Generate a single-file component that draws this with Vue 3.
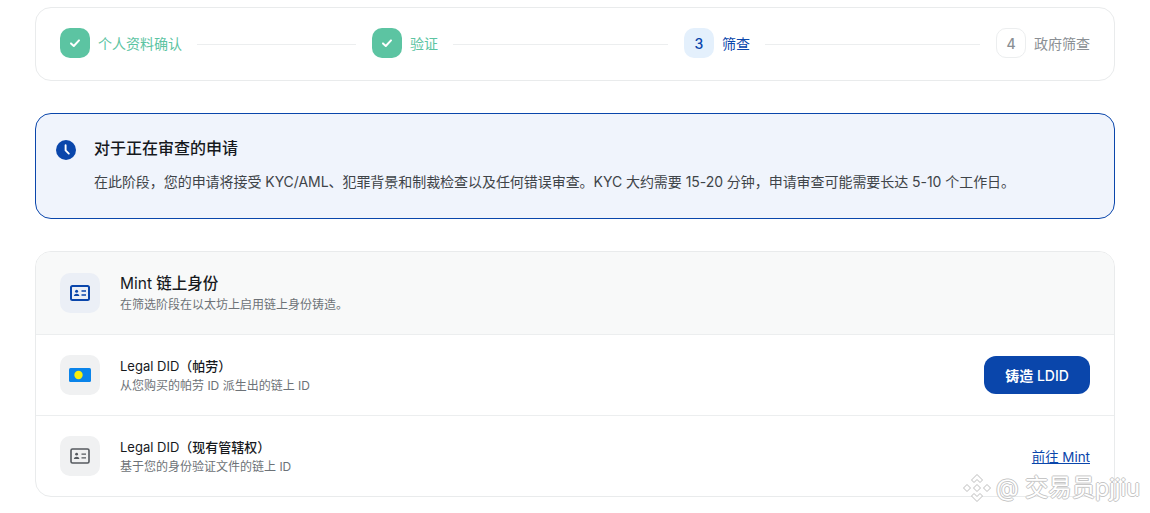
<script setup>
const steps = [
  { label: '个人资料确认', state: 'done' },
  { label: '验证', state: 'done' },
  { label: '筛查', state: 'active', num: 3 },
  { label: '政府筛查', state: 'todo', num: 4 },
]
</script>

<template>
  <div class="page">
    <section class="stepper">
      <div v-for="(s, i) in steps" :key="s.label" class="step" :class="[s.state, { last: i === steps.length - 1 }]">
        <span class="badge">
          <svg v-if="s.state === 'done'" width="14" height="14" viewBox="0 0 14 14" fill="none">
            <path d="M3 7.400 5.800 10 11 4.400" stroke="#fff" stroke-width="2" stroke-linecap="round" stroke-linejoin="round" />
          </svg>
          <template v-else>{{ s.num }}</template>
        </span>
        <span class="label">{{ s.label }}</span>
        <span v-if="i < steps.length - 1" class="line"></span>
      </div>
    </section>

    <section class="alert">
      <svg class="clock" width="20" height="20" viewBox="0 0 20 20">
        <circle cx="10" cy="10" r="10" fill="#0a46ab" />
        <path d="M9.600 5.200V10.400L12.800 13.600" stroke="#fff" stroke-width="1.900" fill="none" stroke-linecap="round" stroke-linejoin="round" />
      </svg>
      <div class="alert-body">
        <h2>对于正在审查的申请</h2>
        <p>在此阶段，您的申请将接受 KYC/AML、犯罪背景和制裁检查以及任何错误审查。KYC 大约需要 15-20 分钟，申请审查可能需要长达 5-10 个工作日。</p>
      </div>
    </section>

    <section class="card">
      <div class="row head">
        <span class="tile blue">
          <svg width="20" height="16" viewBox="0 0 20 16" fill="none">
            <rect x="1" y="1" width="18" height="14" rx="1.500" stroke="#0a46ab" stroke-width="2" />
            <circle cx="6.600" cy="6.200" r="1.500" fill="#0a46ab" />
            <path d="M3.800 11c.3-1.600 1.400-2.300 2.800-2.300s2.500.7 2.800 2.300z" fill="#0a46ab" />
            <path d="M11.500 6h4.500M11.500 10h4.500" stroke="#0a46ab" stroke-width="1.500" />
          </svg>
        </span>
        <div class="text">
          <h3 class="big">Mint <span class="cjk">链上身份</span></h3>
          <p>在筛选阶段在以太坊上启用链上身份铸造。</p>
        </div>
      </div>
      <div class="row">
        <span class="tile">
          <svg width="22" height="14" viewBox="0 0 22 14">
            <rect width="22" height="14" rx="1.500" fill="#0a84ea" />
            <circle cx="9.500" cy="7" r="4.200" fill="#f5ee0e" />
          </svg>
        </span>
        <div class="text">
          <h3>Legal DID<span class="cjk">（帕劳）</span></h3>
          <p>从您购买的帕劳 ID 派生出的链上 ID</p>
        </div>
        <button class="mint" type="button"><span class="strong">铸造</span> LDID</button>
      </div>
      <div class="row">
        <span class="tile">
          <svg width="20" height="16" viewBox="0 0 20 16" fill="none">
            <rect x="1" y="1" width="18" height="14" rx="1.500" stroke="#555a5f" stroke-width="1.600" />
            <circle cx="6.600" cy="6.200" r="1.400" fill="#555a5f" />
            <path d="M3.800 11c.3-1.600 1.400-2.300 2.800-2.300s2.500.7 2.800 2.300z" fill="#555a5f" />
            <path d="M11.500 6.200h4.500M11.500 9.800h4.500" stroke="#555a5f" stroke-width="1.300" />
          </svg>
        </span>
        <div class="text">
          <h3>Legal DID<span class="cjk">（现有管辖权）</span></h3>
          <p>基于您的身份验证文件的链上 ID</p>
        </div>
        <a class="link" href="#" @click.prevent>前往 Mint</a>
      </div>
    </section>

    <div class="mark">
      <svg width="30" height="30" viewBox="0 0 30 30" fill="#fff" stroke="#bdbdbd" stroke-width="1">
        <path d="M15 1.500 20.500 7 18 9.500 15 6.500 12 9.500 9.500 7z" />
        <path d="M15 28.500 20.500 23 18 20.500 15 23.500 12 20.500 9.500 23z" />
        <path d="M1.500 15 5 11.500 8.500 15 5 18.500z" />
        <path d="M28.500 15 25 11.500 21.500 15 25 18.500z" />
        <path d="M15 11.500 18.500 15 15 18.500 11.500 15z" />
      </svg>
      <span>@ 交易员pjjiu</span>
    </div>
  </div>
</template>

<style scoped>
.page {
  position: relative;
  box-sizing: border-box;
  width: 1150px;
  height: 513px;
  padding: 7px 35px 0;
  overflow: hidden;
  background: #fff;
  font-family: Inter, "Noto Sans CJK SC", sans-serif;
  color: #16191d;
}
.stepper {
  box-sizing: border-box;
  display: flex;
  align-items: center;
  height: 74px;
  padding: 0 24px;
  border: 1px solid #e9ebec;
  border-radius: 16px;
}
.step {
  flex: 1 1 0;
  display: flex;
  align-items: center;
  min-width: 0;
}
.step.last {
  flex: none;
}
.badge {
  flex: none;
  box-sizing: border-box;
  display: flex;
  align-items: center;
  justify-content: center;
  width: 30px;
  height: 30px;
  margin: 0 8px 2px 0;
  border-radius: 10px;
  font-size: 14px;
  font-weight: 500;
}
.label {
  flex: none;
  font-size: 14px;
  line-height: 20px;
}
.line {
  flex: 1;
  height: 1px;
  margin: 0 16px 0 15px;
  background: #eceeef;
}
.done .badge {
  background: #5cc4a2;
}
.done .label {
  color: #5cc4a2;
}
.active .badge {
  background: #e4f0fc;
  color: #0a46ab;
}
.active .label {
  color: #0a46ab;
}
.todo .badge {
  border: 1px solid #eceeef;
  color: #8a8f94;
}
.todo .label {
  color: #8a8f94;
}
.alert {
  box-sizing: border-box;
  display: flex;
  height: 106px;
  margin-top: 32px;
  padding: 24px 20px 0;
  border: 1px solid #0a46ab;
  border-radius: 16px;
  background: #f0f4fc;
}
.clock {
  flex: none;
  margin: 2px 18px 0 0;
}
.alert h2 {
  margin: 0;
  font-size: 16px;
  font-weight: 500;
  line-height: 20px;
}
.alert p {
  margin: 14px 0 0;
  font-size: 14px;
  line-height: 20px;
  letter-spacing: -0.05px;
  color: #3f4449;
}
.card {
  margin-top: 32px;
  border: 1px solid #e9ebec;
  border-radius: 16px;
  overflow: hidden;
}
.row {
  box-sizing: border-box;
  display: flex;
  align-items: center;
  height: 81px;
  padding: 0 24px;
  border-top: 1px solid #eceeef;
}
.row.head {
  height: 82px;
  border-top: 0;
  background: #f8f9f9;
}
.tile {
  flex: none;
  display: flex;
  align-items: center;
  justify-content: center;
  width: 40px;
  height: 40px;
  margin-right: 20px;
  border-radius: 10px;
  background: #f0f1f2;
}
.tile.blue {
  background: #ebeff6;
}
.text {
  flex: 1;
  min-width: 0;
}
.text h3 {
  margin: 0 0 1px;
  font-size: 13px;
  font-weight: 400;
  line-height: 20px;
}
.text h3.big {
  font-size: 15.500px;
  line-height: 22px;
}
.cjk {
  font-weight: 500;
}
.text p {
  margin: 0;
  font-size: 12px;
  line-height: 18px;
  color: #6d7277;
}
.mint {
  flex: none;
  width: 106px;
  height: 38px;
  border: 0;
  border-radius: 12px;
  background: #0a46ab;
  color: #fff;
  font-family: inherit;
  font-size: 14px;
  font-weight: 500;
}
.strong {
  font-weight: 700;
}
.link {
  flex: none;
  font-size: 13.400px;
  color: #0a46ab;
  text-decoration: underline;
}
.mark {
  position: absolute;
  left: 962px;
  top: 473px;
  display: flex;
  align-items: center;
  gap: 4px;
  color: #fff;
  font-size: 23.300px;
  line-height: 30px;
  white-space: nowrap;
  text-shadow: -1px 0 #c6c6c6, 1px 0 #c6c6c6, 0 -1px #c6c6c6, 0 1px #c6c6c6;
}
</style>
